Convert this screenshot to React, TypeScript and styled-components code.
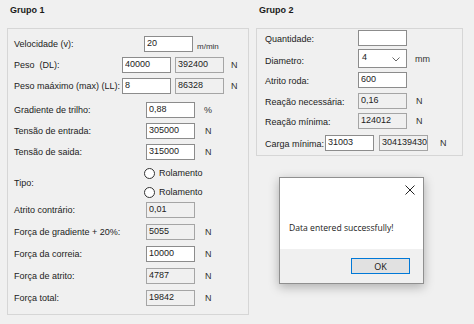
import styled, { createGlobalStyle } from 'styled-components';

const GlobalStyle = createGlobalStyle`
html, body {
  margin: 0;
  padding: 0;
  background: #f0f0f0;
}
body {
  font-family: "Liberation Sans", Arial, sans-serif;
  font-size: 9px;
  color: #222;
}
`

export default function App() {
    return (
        <Page>
            <GlobalStyle />
            <Column $width={242}>
                <Title>Grupo 1</Title>
                <GroupBox $padLeft={6} $padBottom={8}>
                    <Row $mt={7}>
                        <Label $width={130}>Velocidade (v):</Label>
                        <Field defaultValue="20" />
                        <SmallUnit $ml={4}>m/min</SmallUnit>
                    </Row>
                    <Row $mt={5}>
                        <Label $width={108}>Peso&nbsp; (DL):</Label>
                        <Field defaultValue="40000" />
                        <Field $readonly $ml={4} readOnly defaultValue="392400" />
                        <Unit $ml={7}>N</Unit>
                    </Row>
                    <Row $mt={5}>
                        <Label $width={108}>Peso maáximo (max) (LL):</Label>
                        <Field defaultValue="8" />
                        <Field $readonly $ml={4} readOnly defaultValue="86328" />
                        <Unit $ml={7}>N</Unit>
                    </Row>
                    <Row $mt={8}>
                        <Label $width={132}>Gradiente de trilho:</Label>
                        <Field defaultValue="0,88" />
                        <Unit $ml={9}>%</Unit>
                    </Row>
                    <Row $mt={5}>
                        <Label $width={132}>Tensão de entrada:</Label>
                        <Field defaultValue="305000" />
                        <Unit $ml={10}>N</Unit>
                    </Row>
                    <Row $mt={5}>
                        <Label $width={132}>Tensão de saida:</Label>
                        <Field defaultValue="315000" />
                        <Unit $ml={10}>N</Unit>
                    </Row>
                    <RadioRow>
                        <Label $width={130}>Tipo:</Label>
                        <RadioList>
                            <RadioItem><RadioDot />Rolamento</RadioItem>
                            <RadioItem><RadioDot />Rolamento</RadioItem>
                        </RadioList>
                    </RadioRow>
                    <Row $mt={2}>
                        <Label $width={132}>Atrito contrário:</Label>
                        <Field $readonly readOnly defaultValue="0,01" />
                    </Row>
                    <Row $mt={6}>
                        <Label $width={132}>Força de gradiente + 20%:</Label>
                        <Field $readonly readOnly defaultValue="5055" />
                        <Unit $ml={10}>N</Unit>
                    </Row>
                    <Row $mt={6}>
                        <Label $width={132}>Força da correia:</Label>
                        <Field defaultValue="10000" />
                        <Unit $ml={10}>N</Unit>
                    </Row>
                    <Row $mt={6}>
                        <Label $width={132}>Força de atrito:</Label>
                        <Field $readonly readOnly defaultValue="4787" />
                        <Unit $ml={10}>N</Unit>
                    </Row>
                    <Row $mt={6}>
                        <Label $width={132}>Força total:</Label>
                        <Field $readonly readOnly defaultValue="19842" />
                        <Unit $ml={10}>N</Unit>
                    </Row>
                </GroupBox>
            </Column>

            <Column $width={207}>
                <Title>Grupo 2</Title>
                <GroupBox $padLeft={8} $padBottom={4}>
                    <Row $mt={1}>
                        <Label2 $width={93}>Quantidade:</Label2>
                        <Field />
                    </Row>
                    <Row $mt={3} $height={19}>
                        <Label2 $width={93}>Diametro:</Label2>
                        <Combo>
                            <span>4</span>
                            <svg width="8" height="5" viewBox="0 0 8 5">
                                <polyline points="0.5,0.5 4,4 7.5,0.5" fill="none" stroke="#666" strokeWidth="1" />
                            </svg>
                        </Combo>
                        <Unit $ml={8} $self="center">mm</Unit>
                    </Row>
                    <Row $mt={4}>
                        <Label2 $width={93}>Atrito roda:</Label2>
                        <Field defaultValue="600" />
                    </Row>
                    <Row $mt={5}>
                        <Label2 $width={93}>Reação necessária:</Label2>
                        <Field $readonly readOnly defaultValue="0,16" />
                        <Unit $ml={9}>N</Unit>
                    </Row>
                    <Row $mt={4}>
                        <Label2 $width={93}>Reação mínima:</Label2>
                        <Field $readonly readOnly defaultValue="124012" />
                        <Unit $ml={9}>N</Unit>
                    </Row>
                    <Row $mt={6}>
                        <Label2 $width={60}>Carga mínima:</Label2>
                        <Field defaultValue="31003" />
                        <Field $readonly $ml={5} readOnly defaultValue="304139430" />
                        <Unit $ml={12}>N</Unit>
                    </Row>
                </GroupBox>
            </Column>

            <Dialog>
                <DialogHeader>
                    <svg width="10" height="10" viewBox="0 0 10 10">
                        <path d="M0.5 0.5 L9.5 9.5 M9.5 0.5 L0.5 9.5" stroke="#222" strokeWidth="1" />
                    </svg>
                </DialogHeader>
                <DialogBody>Data entered successfully!</DialogBody>
                <DialogFooter>
                    <OkButton>OK</OkButton>
                </DialogFooter>
            </Dialog>
        </Page>
    )
}

const Page = styled.div`
position: relative;
display: flex;
gap: 7px;
width: 474px;
height: 324px;
padding-left: 7px;
box-sizing: border-box;
`

const Column = styled.div<{ $width: number }>`
display: flex;
flex-direction: column;
width: ${p => p.$width}px;
`

const Title = styled.div`
height: 28px;
box-sizing: border-box;
padding: 5px 0 0 3px;
font-weight: bold;
font-size: 9px;
color: #1a1a1a;
`

const GroupBox = styled.div<{ $padLeft: number; $padBottom: number }>`
display: flex;
flex-direction: column;
border: 1px solid #d6d6d6;
padding: 0 0 ${p => p.$padBottom}px ${p => p.$padLeft}px;
`

const Row = styled.div<{ $mt: number; $height?: number }>`
display: flex;
align-items: center;
height: ${p => p.$height ?? 16}px;
margin-top: ${p => p.$mt}px;
`

const Label = styled.div<{ $width: number }>`
width: ${p => p.$width}px;
flex-shrink: 0;
white-space: nowrap;
color: #222;
`

const Label2 = styled(Label)`
align-self: flex-end;
line-height: 13px;
`

const Field = styled.input<{ $readonly?: boolean; $ml?: number }>`
width: 49px;
height: 16px;
box-sizing: border-box;
margin: 0 0 0 ${p => p.$ml ?? 0}px;
padding: 0 0 3px 2px;
border: 1px solid ${p => (p.$readonly ? '#a5a5a5' : '#8c8c8c')};
background: ${p => (p.$readonly ? '#f0f0f0' : '#ffffff')};
font-family: "Liberation Sans", Arial, sans-serif;
font-size: 9px;
color: #222;
outline: none;
border-radius: 0;
`

const Unit = styled.span<{ $ml: number; $self?: string }>`
margin-left: ${p => p.$ml}px;
color: #333;
align-self: ${p => p.$self ?? 'center'};
`

const SmallUnit = styled(Unit)`
font-size: 8px;
margin-top: 4px;
`

const RadioRow = styled.div`
display: flex;
align-items: center;
margin-top: 5px;
height: 35px;
`

const RadioList = styled.div`
display: flex;
flex-direction: column;
gap: 3px;
`

const RadioItem = styled.label`
display: flex;
align-items: center;
gap: 4px;
height: 16px;
color: #222;
`

const RadioDot = styled.span`
width: 11px;
height: 11px;
box-sizing: border-box;
border: 1px solid #333;
border-radius: 50%;
background: #fff;
`

const Combo = styled.div`
display: flex;
justify-content: space-between;
align-items: flex-start;
width: 49px;
height: 19px;
box-sizing: border-box;
padding: 2px 6px 0 3px;
border: 1px solid #8c8c8c;
background: #fff;
svg { margin-top: 5px; }
`

const Dialog = styled.div`
position: absolute;
left: 279px;
top: 177px;
width: 145px;
height: 107px;
box-sizing: border-box;
display: flex;
flex-direction: column;
background: #fff;
border: 1px solid #8f8f8f;
box-shadow: 0 3px 10px rgba(0, 0, 0, 0.28);
font-family: "Open Sans", "Noto Sans", sans-serif;
`

const DialogHeader = styled.div`
display: flex;
justify-content: flex-end;
align-items: center;
height: 24px;
padding-right: 8px;
`

const DialogBody = styled.div`
display: flex;
align-items: center;
height: 47px;
padding: 4px 0 0 9px;
box-sizing: border-box;
font-size: 8.6px;
color: #1a1a1a;
`

const DialogFooter = styled.div`
flex: 1;
display: flex;
justify-content: flex-end;
align-items: flex-start;
padding: 9px 13px 0 0;
background: #f0f0f0;
`

const OkButton = styled.button`
width: 59px;
height: 16px;
padding: 0;
border: 1px solid #0078d7;
background: #e1e1e1;
font-family: "Open Sans", "Noto Sans", sans-serif;
font-size: 9px;
color: #111;
`
